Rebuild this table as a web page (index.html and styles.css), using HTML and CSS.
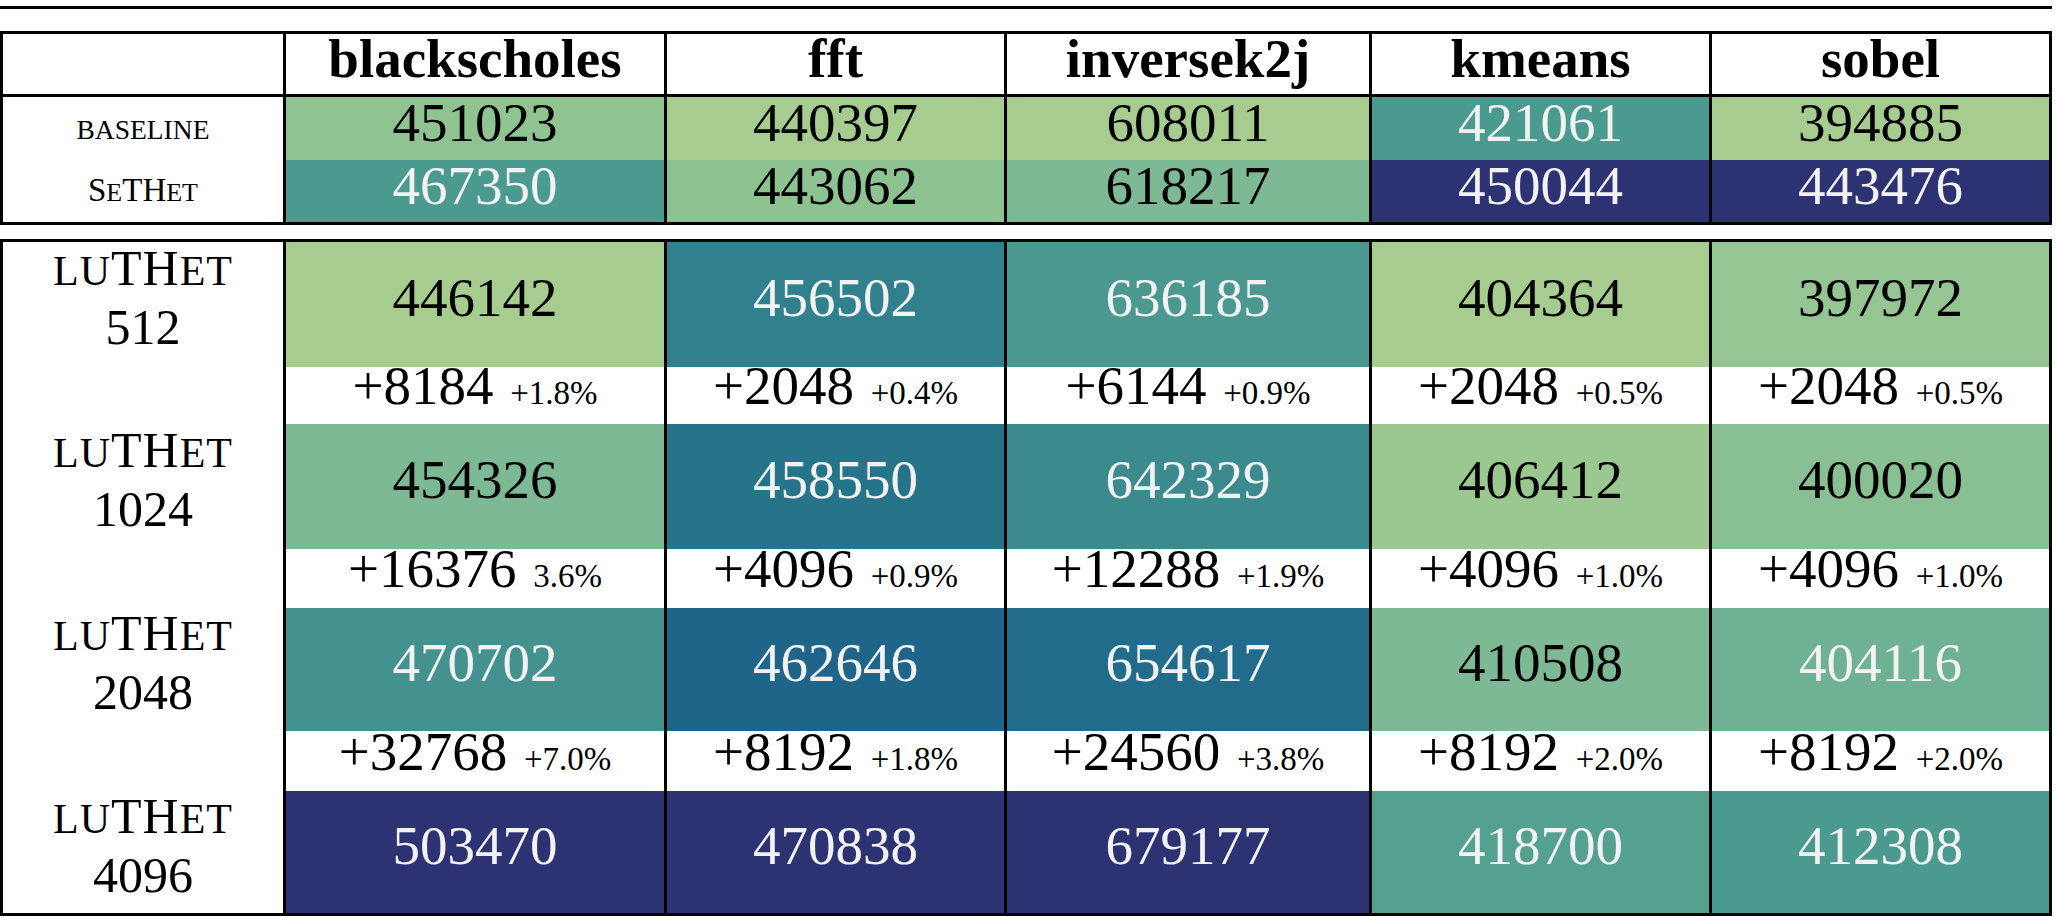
FILE: index.html
```html
<!DOCTYPE html>
<html lang="en">
<head>
<meta charset="utf-8">
<title>LUTHet table</title>
<link rel="stylesheet" href="styles.css">
</head>
<body>
<div class="page">
  <div class="toprule"></div>

  <div class="tbl t1">
    <div class="c hd"></div>
    <div class="c hd">blackscholes</div>
    <div class="c hd">fft</div>
    <div class="c hd">inversek2j</div>
    <div class="c hd">kmeans</div>
    <div class="c hd">sobel</div>

    <div class="c lab"><div class="in"><span class="sm1">baseline</span></div></div>
    <div class="c k2">451023</div>
    <div class="c k1">440397</div>
    <div class="c k1">608011</div>
    <div class="c k7 w">421061</div>
    <div class="c k1">394885</div>

    <div class="c lab"><div class="in"><span class="cap1">S</span><span class="sm2">e</span><span class="cap1">TH</span><span class="sm2">et</span></div></div>
    <div class="c k7 w">467350</div>
    <div class="c k3">443062</div>
    <div class="c k5">618217</div>
    <div class="c nv w">450044</div>
    <div class="c nv w">443476</div>
  </div>

  <div class="tbl t2">
    <div class="c lab2 big"><div class="lt"><span class="sm3">lu</span>TH<span class="sm3">et</span></div><div>512</div></div>
    <div class="c big k1">446142</div>
    <div class="c big t30 w">456502</div>
    <div class="c big t4a w">636185</div>
    <div class="c big k1">404364</div>
    <div class="c big k2b">397972</div>

    <div class="c dl"></div>
    <div class="c dl"><div class="in">+8184 <span class="pct">+1.8%</span></div></div>
    <div class="c dl"><div class="in">+2048 <span class="pct">+0.4%</span></div></div>
    <div class="c dl"><div class="in">+6144 <span class="pct">+0.9%</span></div></div>
    <div class="c dl"><div class="in">+2048 <span class="pct">+0.5%</span></div></div>
    <div class="c dl"><div class="in">+2048 <span class="pct">+0.5%</span></div></div>

    <div class="c lab2 big"><div class="lt"><span class="sm3">lu</span>TH<span class="sm3">et</span></div><div>1024</div></div>
    <div class="c big k5">454326</div>
    <div class="c big t26 w">458550</div>
    <div class="c big t3b w">642329</div>
    <div class="c big k2c">406412</div>
    <div class="c big k4">400020</div>

    <div class="c dl"></div>
    <div class="c dl"><div class="in">+16376 <span class="pct">3.6%</span></div></div>
    <div class="c dl"><div class="in">+4096 <span class="pct">+0.9%</span></div></div>
    <div class="c dl"><div class="in">+12288 <span class="pct">+1.9%</span></div></div>
    <div class="c dl"><div class="in">+4096 <span class="pct">+1.0%</span></div></div>
    <div class="c dl"><div class="in">+4096 <span class="pct">+1.0%</span></div></div>

    <div class="c lab2 big"><div class="lt"><span class="sm3">lu</span>TH<span class="sm3">et</span></div><div>2048</div></div>
    <div class="c big t44 w">470702</div>
    <div class="c big t1f w">462646</div>
    <div class="c big t21 w">654617</div>
    <div class="c big k5">410508</div>
    <div class="c big k6 w">404116</div>

    <div class="c dl"></div>
    <div class="c dl"><div class="in">+32768 <span class="pct">+7.0%</span></div></div>
    <div class="c dl"><div class="in">+8192 <span class="pct">+1.8%</span></div></div>
    <div class="c dl"><div class="in">+24560 <span class="pct">+3.8%</span></div></div>
    <div class="c dl"><div class="in">+8192 <span class="pct">+2.0%</span></div></div>
    <div class="c dl"><div class="in">+8192 <span class="pct">+2.0%</span></div></div>

    <div class="c lab2 big"><div class="lt"><span class="sm3">lu</span>TH<span class="sm3">et</span></div><div>4096</div></div>
    <div class="c big nv w">503470</div>
    <div class="c big nv w">470838</div>
    <div class="c big nv w">679177</div>
    <div class="c big k8 w">418700</div>
    <div class="c big k7 w">412308</div>
  </div>
</div>
</body>
</html>
```

FILE: styles.css
```css
html, body {
  margin: 0;
  padding: 0;
  background: #ffffff;
}

body {
  font-family: "Liberation Serif", "DejaVu Serif", "Times New Roman", serif;
  color: #000;
}

.page {
  width: 2052px;
  display: flex;
  flex-direction: column;
}

.toprule {
  margin-top: 6px;
  height: 3px;
  background: #000;
}

.tbl {
  display: grid;
  grid-template-columns: 280px 378px 337px 362px 337px 337px;
  column-gap: 3px;
  background: #000;
  border: 3px solid #000;
}

.t1 {
  margin-top: 22px;
  grid-template-rows: 63px 63px 62px;
}

.t2 {
  margin-top: 14px;
  grid-template-rows: 125px 57px 125px 59px 123px 60px 122px;
}

.c {
  box-sizing: border-box;
  display: flex;
  align-items: center;
  justify-content: center;
  background: #fff;
  font-family: "Liberation Serif", "DejaVu Serif", serif;
  font-size: 55px;
  line-height: 1;
  white-space: nowrap;
  padding-bottom: 12px;
}

.c.big {
  padding-bottom: 14px;
}

.hd {
  font-weight: bold;
  border-bottom: 3px solid #000;
  padding-bottom: 11px;
}

.w {
  color: #f2f2f2;
}

.in {
  font-size: 55px;
  line-height: 55px;
}

.lab .in {
  padding-top: 4px;
}

/* small caps pieces */
.sm1 {
  font-size: 27.5px;
  text-transform: uppercase;
}

.cap1 {
  font-size: 33px;
}

.sm2 {
  font-size: 26px;
  text-transform: uppercase;
}

.lab2 {
  flex-direction: column;
  font-size: 50px;
  line-height: 56px;
}

.lt {
  letter-spacing: 1px;
}

.sm3 {
  font-size: 42px;
  text-transform: uppercase;
}

.dl {
  background: #fff;
}

.pct {
  font-size: 33px;
  margin-left: 3px;
}

/* heat colours */
.k1 { background: #a6cd8f; }
.k2 { background: #8fc492; }
.k2b { background: #94c592; }
.k2c { background: #9ac890; }
.k3 { background: #8dc391; }
.k4 { background: #88c093; }
.k5 { background: #7cb994; }
.k6 { background: #6eb293; }
.k7 { background: #4b9a8f; }
.k8 { background: #55a190; }
.t4a { background: #4a988f; }
.t44 { background: #44928f; }
.t3b { background: #3b8a8e; }
.t30 { background: #30818d; }
.t26 { background: #26748a; }
.t21 { background: #216c8b; }
.t1f { background: #1f658a; }
.nv { background: #2d3273; }
```
